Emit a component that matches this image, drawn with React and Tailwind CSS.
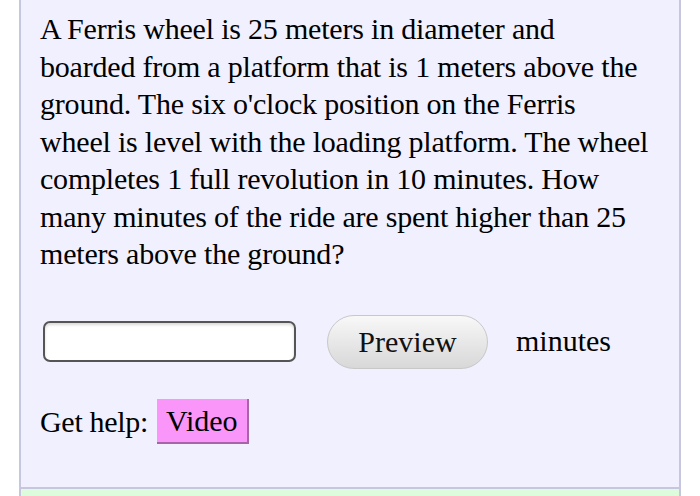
export default function App() {
  return (
    <div className="w-[700px] h-[496px] bg-white overflow-hidden" style={{ fontFamily: '"Liberation Serif", "Times New Roman", serif' }}>
      <div className="ml-[19px] w-[662px] h-[489px] bg-[#f1f0fe] border-x-2 border-b-2 border-[#c6c6de] pl-[19px] pr-2 pt-[10px] text-black">
        <p className="text-[30px] leading-[37.5px] tracking-[-0.2px]">
          A Ferris wheel is 25 meters in diameter and<br />
          boarded from a platform that is 1 meters above the<br />
          ground. The six o'clock position on the Ferris<br />
          wheel is level with the loading platform. The wheel<br />
          completes 1 full revolution in 10 minutes. How<br />
          many minutes of the ride are spent higher than 25<br />
          meters above the ground?
        </p>
        <div className="flex items-center mt-[42px] pl-[3px]">
          <input type="text" className="w-[253px] h-[41px] bg-white border-2 border-[#555] rounded-[7px] shadow-[inset_0_2px_3px_rgba(0,0,0,0.15)]" />
          <button className="ml-[31px] w-[161px] h-[54px] rounded-full border border-[#c8c8c8] bg-gradient-to-b from-[#f8f8f8] to-[#d8d8d8] text-[30px] text-[#111]">
            Preview
          </button>
          <span className="ml-[28px] text-[30px] -mt-[3px]">minutes</span>
        </div>
        <div className="flex items-center mt-[30px]">
          <span className="text-[30px] tracking-[-0.3px]">Get help:</span>
          <span className="ml-[9px] px-[9px] h-[45px] flex items-center bg-[#fa96fa] border-r-2 border-b-2 border-[#a864a8] text-[30px]">
            Video
          </span>
        </div>
      </div>
      <div className="ml-[19px] w-[662px] h-[7px] bg-[#dcfcdc] border-x-2 border-[#c6c6de]" />
    </div>
  );
}
